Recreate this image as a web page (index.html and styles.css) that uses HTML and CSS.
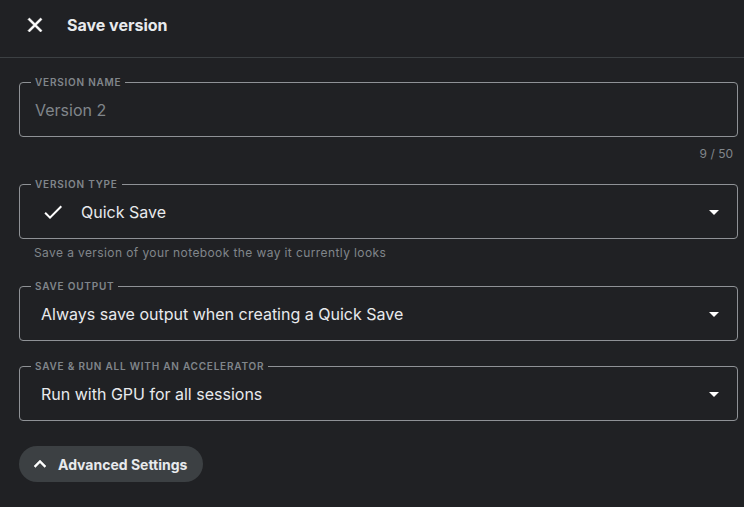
FILE: index.html
```html
<!DOCTYPE html>
<html lang="en">
<head>
<meta charset="utf-8">
<title>Save version</title>
<link rel="stylesheet" href="styles.css">
</head>
<body>
<header class="header">
  <button class="icon-btn" aria-label="Close">
    <svg viewBox="0 0 24 24" width="24" height="24"><path d="M19 6.41L17.59 5 12 10.59 6.41 5 5 6.41 10.59 12 5 17.59 6.41 19 12 13.41 17.59 19 19 17.59 13.41 12z"/></svg>
  </button>
  <h1 class="title">Save version</h1>
</header>
<main class="content">
  <div class="group group-name">
    <fieldset class="field">
      <legend class="label">Version name</legend>
      <div class="field-row pad-input">
        <span class="placeholder">Version 2</span>
      </div>
    </fieldset>
    <div class="counter">9 / 50</div>
  </div>

  <div class="group group-type">
    <fieldset class="field">
      <legend class="label">Version type</legend>
      <div class="field-row pad-select">
        <svg class="check" viewBox="0 0 24 24" width="24" height="24"><path d="M9 16.17L4.83 12l-1.42 1.41L9 19 21 7l-1.41-1.41z"/></svg>
        <span class="value">Quick Save</span>
        <svg class="caret" viewBox="0 0 24 24" width="24" height="24"><path d="M7 10l5 5 5-5z"/></svg>
      </div>
    </fieldset>
    <div class="helper">Save a version of your notebook the way it currently looks</div>
  </div>

  <div class="group group-output">
    <fieldset class="field">
      <legend class="label">Save output</legend>
      <div class="field-row pad-select">
        <span class="value">Always save output when creating a Quick Save</span>
        <svg class="caret" viewBox="0 0 24 24" width="24" height="24"><path d="M7 10l5 5 5-5z"/></svg>
      </div>
    </fieldset>
  </div>

  <div class="group group-accel">
    <fieldset class="field">
      <legend class="label">Save &amp; Run All with an accelerator</legend>
      <div class="field-row pad-select">
        <span class="value">Run with GPU for all sessions</span>
        <svg class="caret" viewBox="0 0 24 24" width="24" height="24"><path d="M7 10l5 5 5-5z"/></svg>
      </div>
    </fieldset>
  </div>

  <button class="adv-btn">
    <svg viewBox="0 0 24 24" width="24" height="24"><path d="M12 8l-6 6 1.41 1.41L12 10.83l4.59 4.58L18 14z"/></svg>
    <span>Advanced Settings</span>
  </button>
</main>
</body>
</html>
```
FILE: styles.css
```css
* { box-sizing: border-box; }
html, body {
  margin: 0;
  background: #202124;
  color: #e8eaed;
  font-family: Inter, "Noto Sans", sans-serif;
}
.header {
  display: flex;
  align-items: center;
  height: 58px;
  padding: 13px 0 20px 23px;
  border-bottom: 1px solid #3c4043;
}
.icon-btn {
  width: 24px;
  height: 24px;
  padding: 0;
  border: 0;
  background: none;
  margin-right: 20px;
  display: flex;
}
.icon-btn svg { fill: #ffffff; stroke: #ffffff; stroke-width: 0.6; }
.title {
  margin: 0;
  font-size: 16px;
  line-height: 24px;
  font-weight: 700;
  color: #e8eaed;
}
.content {
  padding: 18px 6px 0 19px;
  display: flex;
  flex-direction: column;
}
.group { display: flex; flex-direction: column; }
.field {
  margin: 0;
  padding: 0;
  border: 1px solid #8f9296;
  border-radius: 4px;
  min-width: 0;
}
.label {
  margin-left: 11px;
  padding: 0 4px;
  font-size: 10px;
  line-height: 13px;
  font-weight: 600;
  letter-spacing: 0.78px;
  text-transform: uppercase;
  color: #80868b;
}
.field-row {
  margin-top: -6px;
  height: 53px;
  display: flex;
  align-items: center;
}
.pad-input { padding-left: 15px; }
.pad-select { padding-left: 21px; padding-right: 11px; }
.placeholder {
  font-size: 16px;
  color: #80868b;
}
.value {
  flex: 1;
  font-size: 16px;
  color: #e8eaed;
}
.check { fill: #ffffff; margin-right: 16px; flex: none; }
.caret { fill: #ffffff; flex: none; }
.counter {
  align-self: flex-end;
  margin-right: 5px;
  margin-top: 9px;
  font-size: 12px;
  line-height: 15px;
  color: #80868b;
}
.helper {
  margin-top: 6px;
  padding-left: 15px;
  font-size: 12px;
  line-height: 15px;
  letter-spacing: 0.4px;
  color: #80868b;
}
.group-name { margin-bottom: 17px; }
.group-type { margin-bottom: 20px; }
.group-output { margin-bottom: 19px; }
.group-accel { margin-bottom: 25px; }
.adv-btn {
  align-self: flex-start;
  display: flex;
  align-items: center;
  gap: 6px;
  height: 36px;
  padding: 0 16px 0 9px;
  border: 0;
  border-radius: 18px;
  background: #3c4043;
  color: #e8eaed;
  font-family: inherit;
  font-size: 14px;
  font-weight: 700;
}
.adv-btn svg { fill: #ffffff; stroke: #ffffff; stroke-width: 0.5; }
```
